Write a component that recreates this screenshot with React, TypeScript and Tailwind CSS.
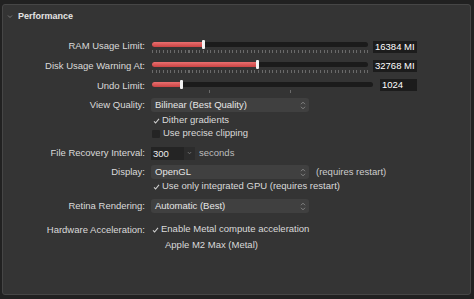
const font = "font-['Liberation_Sans',Arial,sans-serif]";

function UpDown() {
  return (
    <svg width="6" height="9" viewBox="0 0 6 9" className="ml-auto mr-[3px]">
      <path d="M1 3.2 L3 1.2 L5 3.2" stroke="#8a8a8a" strokeWidth="0.9" fill="none" />
      <path d="M1 5.8 L3 7.8 L5 5.8" stroke="#8a8a8a" strokeWidth="0.9" fill="none" />
    </svg>
  );
}

function Check() {
  return (
    <svg width="9" height="8" viewBox="0 0 9 8" className="shrink-0">
      <path d="M2 4.3 L3.6 6 L7 1.8" stroke="#cfcfcf" strokeWidth="1.1" fill="none" />
    </svg>
  );
}

function Label({ children }: { children: React.ReactNode }) {
  return <div className="w-[142px] shrink-0 whitespace-nowrap text-right leading-[12px]">{children}</div>;
}

function SliderRow({
  label,
  pct,
  value,
  trackW,
  boxW,
  boxGap,
  dense,
  boxTop,
}: {
  label: string;
  pct: number;
  value: string;
  trackW: string;
  boxW: string;
  boxGap: string;
  dense: boolean;
  boxTop: string;
}) {
  return (
    <div className="flex h-[20px]">
      <div className="pt-[5px]">
        <Label>{label}</Label>
      </div>
      <div className={`ml-[7px] shrink-0 pt-[7px] ${trackW}`}>
        <div className="relative h-[5px] rounded-full bg-[#1b1b1b]">
          <div
            className="absolute left-0 top-0 h-[5px] rounded-full bg-[linear-gradient(#e97070,#c94343)]"
            style={{ width: `${pct}%` }}
          />
          <div
            className="absolute top-[-2px] h-[9px] w-[3px] rounded-[1px] bg-[#f2f2f2]"
            style={{ left: `calc(${pct}% - 2px)` }}
          />
        </div>
        {dense ? (
          <div className="mt-[3px] h-[3px] bg-[repeating-linear-gradient(90deg,#6a6a6a_0_1px,transparent_1px_3.65px)]" />
        ) : (
          <div className="relative mt-[3px] h-[3px]">
            <div className="absolute left-[57px] top-0 h-[3px] w-[1px] bg-[#6a6a6a]" />
            <div className="absolute left-[138px] top-0 h-[3px] w-[1px] bg-[#6a6a6a]" />
          </div>
        )}
      </div>
      <div
        className={`${boxGap} ${boxTop} h-[12px] shrink-0 ${boxW} overflow-hidden whitespace-nowrap bg-[#1c1c1c] pl-[2px] leading-[12px] text-white`}
      >
        {value}
      </div>
    </div>
  );
}

function SelectRow({
  label,
  value,
  extra,
  cls,
}: {
  label: string;
  value: string;
  extra?: string;
  cls: string;
}) {
  return (
    <div className={`flex items-center ${cls}`}>
      <Label>{label}</Label>
      <div className="ml-[6px] flex h-[14px] w-[158px] items-center rounded-[3px] bg-[#404040] pl-[4px] text-[#e6e6e6]">
        {value}
        <UpDown />
      </div>
      {extra && <div className="ml-[7px] text-[#cdcdcd]">{extra}</div>}
    </div>
  );
}

function CheckRow({
  text,
  checked,
  cls,
}: {
  text: string;
  checked: boolean;
  cls: string;
}) {
  return (
    <div className={`flex items-center pl-[148px] ${cls}`}>
      {checked ? (
        <div className="ml-[1px] mr-[1px]">
          <Check />
        </div>
      ) : (
        <div className="mr-[3px] ml-[1px] h-[8px] w-[8px] rounded-[1px] bg-[#242424]" />
      )}
      <span>{text}</span>
    </div>
  );
}

export default function App() {
  return (
    <div className={`h-[299px] w-[474px] bg-[#212121] pb-[4px] pl-[2px] pr-[3px] pt-[4px] ${font} text-[9.5px] text-[#dadada]`}>
      <div className="h-full rounded-[3px] border border-[#464646] bg-[#343434]">
        <div className="flex h-[23px] items-center pl-[4px]">
          <svg width="6" height="5" viewBox="0 0 6 5" className="mr-[5px]">
            <path d="M1 1.5 L3 3.5 L5 1.5" stroke="#7c7c7c" strokeWidth="0.9" fill="none" />
          </svg>
          <span className="text-[9px] font-bold text-[#e4e4e4]">Performance</span>
        </div>

        <div className="mt-[7px]">
          <SliderRow label="RAM Usage Limit:" pct={24} value="16384 MI" trackW="w-[216px]" boxW="w-[44px]" boxGap="ml-[5px]" dense boxTop="mt-[6px]" />
          <SliderRow label="Disk Usage Warning At:" pct={49} value="32768 MI" trackW="w-[216px]" boxW="w-[44px]" boxGap="ml-[5px]" dense boxTop="mt-[5px]" />
          <SliderRow label="Undo Limit:" pct={13.5} value="1024" trackW="w-[221px]" boxW="w-[37px]" boxGap="ml-[7px]" dense={false} boxTop="mt-[4px]" />
        </div>

        <SelectRow label="View Quality:" value="Bilinear (Best Quality)" cls="mt-[2px] h-[16px]" />
        <CheckRow text="Dither gradients" checked cls="mt-[1px] h-[13px]" />
        <CheckRow text="Use precise clipping" checked={false} cls="h-[13px]" />

        <div className="mt-[6px] flex h-[14px] items-center">
          <Label>File Recovery Interval:</Label>
          <div className="ml-[6px] flex h-[13px]">
            <div className="w-[33px] bg-[#242424] pl-[2px] leading-[13px] text-[#ececec]">300</div>
            <div className="flex w-[11px] items-center justify-center bg-[#2c2c2c]">
              <svg width="5" height="4" viewBox="0 0 5 4">
                <path d="M0.8 1 L2.5 2.8 L4.2 1" stroke="#7a7a7a" strokeWidth="0.8" fill="none" />
              </svg>
            </div>
          </div>
          <div className="ml-[4px] text-[#bdbdbd]">seconds</div>
        </div>

        <SelectRow label="Display:" value="OpenGL" extra="(requires restart)" cls="mt-[5px] h-[14px]" />
        <CheckRow text="Use only integrated GPU (requires restart)" checked cls="mt-[1px] h-[13px]" />

        <SelectRow label="Retina Rendering:" value="Automatic (Best)" cls="mt-[6px] h-[14px]" />

        <div className="mt-[10px] flex h-[13px] items-center">
          <Label>Hardware Acceleration:</Label>
          <div className="ml-[6px] flex items-center">
            <Check />
            <span className="ml-[1px]">Enable Metal compute acceleration</span>
          </div>
        </div>
        <div className="mt-[3px] h-[12px] pl-[162px] leading-[12px]">Apple M2 Max (Metal)</div>
      </div>
    </div>
  );
}
